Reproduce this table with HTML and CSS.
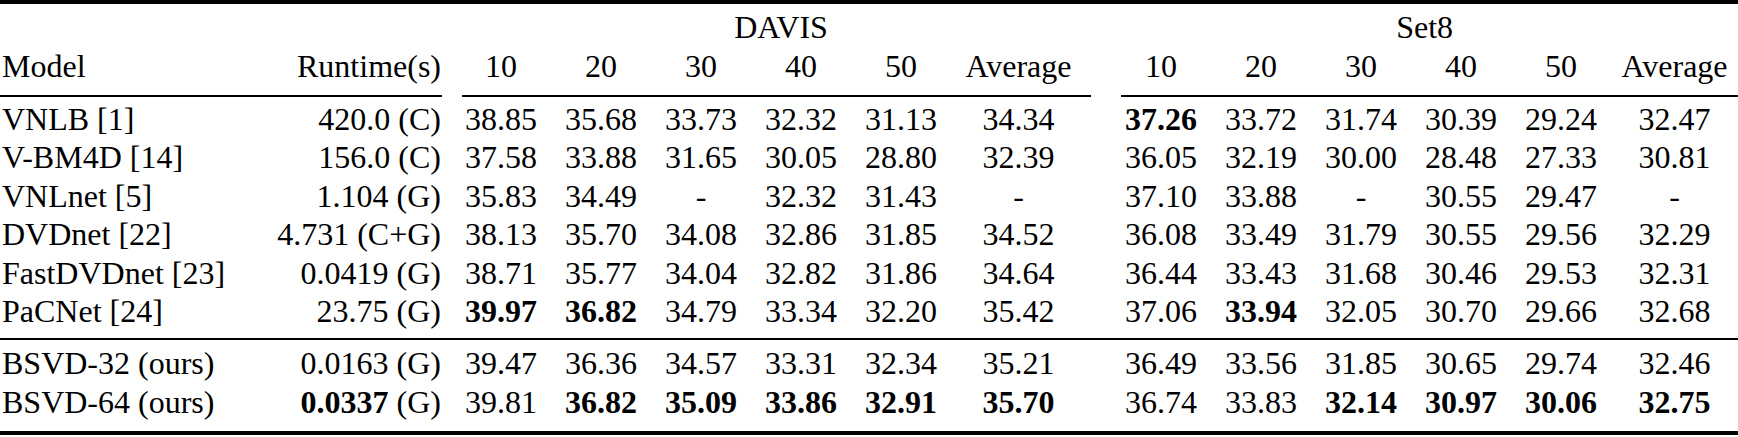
FILE: index.html
```html
<!DOCTYPE html>
<html lang="en">
<head>
    <meta charset="UTF-8">
    <meta name="viewport" content="width=device-width, initial-scale=1.0">
    <title>Video Denoising Results</title>
    <link rel="stylesheet" href="styles.css">
</head>
<body>
    <table class="results">
        <colgroup>
            <col class="c-model">
            <col class="c-runtime">
            <col class="c-num"><col class="c-num"><col class="c-num"><col class="c-num"><col class="c-num">
            <col class="c-avg">
            <col class="c-gap">
            <col class="c-num"><col class="c-num"><col class="c-num"><col class="c-num"><col class="c-num">
            <col class="c-avg-last">
        </colgroup>
        <thead>
            <tr class="group-row">
                <th colspan="2"></th>
                <th colspan="7">DAVIS</th>
                <th colspan="6">Set8</th>
            </tr>
            <tr class="head-row">
                <th class="model">Model</th>
                <th class="runtime">Runtime(s)</th>
                <th>10</th><th>20</th><th>30</th><th>40</th><th>50</th><th>Average</th>
                <th></th>
                <th>10</th><th>20</th><th>30</th><th>40</th><th>50</th><th>Average</th>
            </tr>
            <tr class="rule-row cmid">
                <td colspan="2"><div class="rule rule-left"></div></td>
                <td colspan="7"><div class="rule rule-davis"></div></td>
                <td colspan="6"><div class="rule rule-set8"></div></td>
            </tr>
        </thead>
        <tbody>
            <tr>
                <td class="model">VNLB [1]</td>
                <td class="runtime">420.0 (C)</td>
                <td>38.85</td><td>35.68</td><td>33.73</td><td>32.32</td><td>31.13</td><td>34.34</td>
                <td></td>
                <td><b>37.26</b></td><td>33.72</td><td>31.74</td><td>30.39</td><td>29.24</td><td>32.47</td>
            </tr>
            <tr>
                <td class="model">V-BM4D [14]</td>
                <td class="runtime">156.0 (C)</td>
                <td>37.58</td><td>33.88</td><td>31.65</td><td>30.05</td><td>28.80</td><td>32.39</td>
                <td></td>
                <td>36.05</td><td>32.19</td><td>30.00</td><td>28.48</td><td>27.33</td><td>30.81</td>
            </tr>
            <tr>
                <td class="model">VNLnet [5]</td>
                <td class="runtime">1.104 (G)</td>
                <td>35.83</td><td>34.49</td><td>-</td><td>32.32</td><td>31.43</td><td>-</td>
                <td></td>
                <td>37.10</td><td>33.88</td><td>-</td><td>30.55</td><td>29.47</td><td>-</td>
            </tr>
            <tr>
                <td class="model">DVDnet [22]</td>
                <td class="runtime">4.731 (C+G)</td>
                <td>38.13</td><td>35.70</td><td>34.08</td><td>32.86</td><td>31.85</td><td>34.52</td>
                <td></td>
                <td>36.08</td><td>33.49</td><td>31.79</td><td>30.55</td><td>29.56</td><td>32.29</td>
            </tr>
            <tr>
                <td class="model">FastDVDnet [23]</td>
                <td class="runtime">0.0419 (G)</td>
                <td>38.71</td><td>35.77</td><td>34.04</td><td>32.82</td><td>31.86</td><td>34.64</td>
                <td></td>
                <td>36.44</td><td>33.43</td><td>31.68</td><td>30.46</td><td>29.53</td><td>32.31</td>
            </tr>
            <tr>
                <td class="model">PaCNet [24]</td>
                <td class="runtime">23.75 (G)</td>
                <td><b>39.97</b></td><td><b>36.82</b></td><td>34.79</td><td>33.34</td><td>32.20</td><td>35.42</td>
                <td></td>
                <td>37.06</td><td><b>33.94</b></td><td>32.05</td><td>30.70</td><td>29.66</td><td>32.68</td>
            </tr>
            <tr class="rule-row mid">
                <td colspan="15"><div class="rule"></div></td>
            </tr>
            <tr>
                <td class="model">BSVD-32 (ours)</td>
                <td class="runtime">0.0163 (G)</td>
                <td>39.47</td><td>36.36</td><td>34.57</td><td>33.31</td><td>32.34</td><td>35.21</td>
                <td></td>
                <td>36.49</td><td>33.56</td><td>31.85</td><td>30.65</td><td>29.74</td><td>32.46</td>
            </tr>
            <tr class="last-row">
                <td class="model">BSVD-64 (ours)</td>
                <td class="runtime"><b>0.0337</b> (G)</td>
                <td>39.81</td><td><b>36.82</b></td><td><b>35.09</b></td><td><b>33.86</b></td><td><b>32.91</b></td><td><b>35.70</b></td>
                <td></td>
                <td>36.74</td><td>33.83</td><td><b>32.14</b></td><td><b>30.97</b></td><td><b>30.06</b></td><td><b>32.75</b></td>
            </tr>
        </tbody>
    </table>
</body>
</html>
```

FILE: styles.css
```css
body {
    margin: 0;
    padding: 0;
    background: white;
    color: #000;
    font-family: "Liberation Serif", "Times New Roman", serif;
}

.results {
    width: 1738px;
    table-layout: fixed;
    border-spacing: 0;
    border-top: 4px solid #000;
    border-bottom: 4px solid #000;
    font-size: 32px;
}

.c-model { width: 260px; }
.c-runtime { width: 191px; }
.c-num { width: 100px; }
.c-avg { width: 135px; }
.c-gap { width: 25px; }
.c-avg-last { width: 127px; }

.results th,
.results td {
    padding: 0;
    font-weight: normal;
    text-align: center;
    white-space: nowrap;
    line-height: 38.4px;
}

.results b {
    font-weight: bold;
}

.results .model {
    text-align: left;
    padding-left: 2px;
}

.results .runtime {
    text-align: right;
    padding-right: 10px;
}

.group-row th {
    line-height: 46.4px;
}

.head-row th {
    line-height: 33.6px;
}

/* booktabs style rules */
.rule-row td {
    line-height: 0;
}

.rule {
    height: 2px;
    background: #000;
}

.cmid td {
    padding-top: 11px;
    padding-bottom: 3px;
}

.rule-left {
    margin-right: 9px;
}

.rule-davis {
    margin-left: 11px;
    margin-right: 20px;
}

.rule-set8 {
    margin-left: 10px;
}

.mid td {
    padding-top: 8px;
    padding-bottom: 4px;
}

.last-row td {
    padding-bottom: 10px;
}
```
